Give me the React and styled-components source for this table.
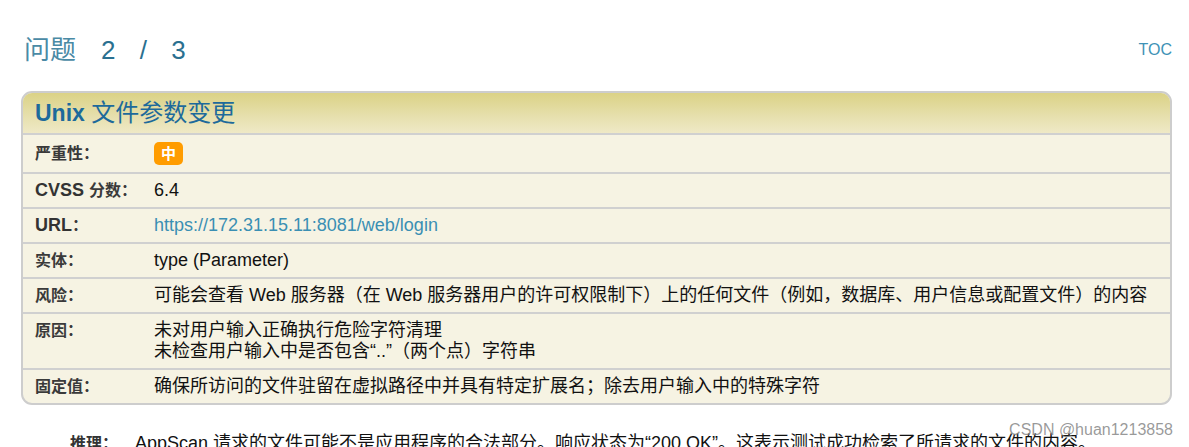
import React from 'react'
import styled, { createGlobalStyle } from 'styled-components'

const GlobalStyle = createGlobalStyle`
  html, body {
    margin: 0;
    padding: 0;
    background: #fff;
    overflow: hidden;
  }
  body {
    font-family: "Liberation Sans", Arial, "Noto Sans CJK SC", sans-serif;
    color: #111;
    text-spacing-trim: space-all;
  }
`

const Page = styled.div`
  position: relative;
  height: 447px;
  padding: 0 17px 0 21px;
  overflow: hidden;
`

const TopBar = styled.div`
  display: flex;
  justify-content: space-between;
  align-items: center;
  padding-top: 33px;
  height: 34px;
`

const Heading = styled.h1`
  margin: 0;
  font-size: 26px;
  font-weight: normal;
  line-height: 34px;
  color: #4a8aa5;
  padding-left: 3px;
`

const Counter = styled.span`
  margin-left: 25px;
  color: #2a7090;
  word-spacing: 17px;
`

const TocLink = styled.a`
  font-size: 16px;
  color: #3e92b6;
  text-decoration: none;
`

const Box = styled.div`
  margin-top: 24px;
  border: 2px solid #cdcdcd;
  border-radius: 11px;
  overflow: hidden;
  background: #f6f3e3;
`

const Title = styled.div`
  height: 40px;
  line-height: 40px;
  padding-left: 12px;
  font-size: 23px;
  font-weight: bold;
  color: #1d6a9b;
  background: linear-gradient(to bottom, #dbd286 0%, #e6dfab 55%, #efe9c6 100%);
`

const TitleHan = styled.span`
  font-weight: normal;
  font-size: 24px;
`

const Row = styled.div`
  display: grid;
  grid-template-columns: 131px 1fr;
  align-items: ${p => (p.$center ? 'center' : 'start')};
  border-top: 2px solid #d0d0d0;
  padding: ${p => (p.$center ? '7px 0' : '6px 0')};
  min-height: ${p => (p.$center ? '23px' : 'auto')};
`

const Label = styled.div`
  padding-left: 12px;
  font-size: 18px;
  line-height: 21px;
  font-weight: bold;
  color: #333;
`

const LabelHan = styled.span`
  font-size: 16px;
  color: #3a3a3a;
`

const Value = styled.div`
  font-size: 18px;
  line-height: 21px;
  color: #111;
`

const Link = styled.a`
  color: #3a8fb3;
  text-decoration: none;
`

const Badge = styled.span`
  display: inline-flex;
  align-items: center;
  justify-content: center;
  width: 29px;
  height: 23px;
  border-radius: 5px;
  background: #ff9c00;
  color: #fff;
  font-size: 15px;
  font-weight: bold;
`

const Reasoning = styled.div`
  display: flex;
  margin-top: 28px;
  padding-left: 49px;
  font-size: 18px;
  line-height: 21px;
  white-space: nowrap;
`

const ReasonLabel = styled.span`
  width: 65px;
  flex: none;
  font-weight: bold;
  font-size: 16px;
  color: #333;
`

const Watermark = styled.div`
  position: absolute;
  right: 16px;
  top: 421px;
  font-size: 16px;
  color: rgba(120, 120, 120, 0.75);
  white-space: nowrap;
`

const rows = [
  { label: <LabelHan>严重性：</LabelHan>, value: <Badge>中</Badge>, center: true },
  { label: <>CVSS <LabelHan>分数：</LabelHan></>, value: '6.4' },
  {
    label: <>URL<LabelHan>：</LabelHan></>,
    value: <Link href="#">https://172.31.15.11:8081/web/login</Link>,
  },
  { label: <LabelHan>实体：</LabelHan>, value: 'type (Parameter)' },
  {
    label: <LabelHan>风险：</LabelHan>,
    value:
      '可能会查看 Web 服务器（在 Web 服务器用户的许可权限制下）上的任何文件（例如，数据库、用户信息或配置文件）的内容',
  },
  {
    label: <LabelHan>原因：</LabelHan>,
    value: (
      <>
        未对用户输入正确执行危险字符清理
        <br />
        未检查用户输入中是否包含“..”（两个点）字符串
      </>
    ),
  },
  {
    label: <LabelHan>固定值：</LabelHan>,
    value: '确保所访问的文件驻留在虚拟路径中并具有特定扩展名；除去用户输入中的特殊字符',
  },
]

export default function App() {
  return (
    <Page>
      <GlobalStyle />
      <TopBar>
        <Heading>
          问题<Counter>2 / 3</Counter>
        </Heading>
        <TocLink href="#">TOC</TocLink>
      </TopBar>

      <Box>
        <Title>
          Unix <TitleHan>文件参数变更</TitleHan>
        </Title>
        {rows.map((r, i) => (
          <Row key={i} $center={r.center}>
            <Label>{r.label}</Label>
            <Value>{r.value}</Value>
          </Row>
        ))}
      </Box>

      <Reasoning>
        <ReasonLabel>推理：</ReasonLabel>
        <span>
          AppScan 请求的文件可能不是应用程序的合法部分。响应状态为“200 OK”。这表示测试成功检索了所请求的文件的内容。
        </span>
      </Reasoning>

      <Watermark>CSDN @huan1213858</Watermark>
    </Page>
  )
}
